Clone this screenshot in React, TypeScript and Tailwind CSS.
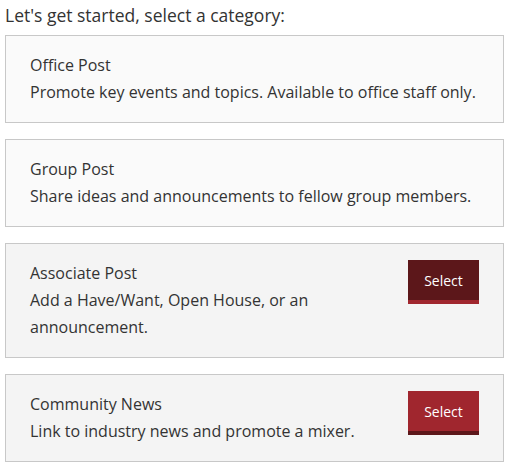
import React from "react";

type Category = {
  title: string;
  description: string;
  action?: "dark" | "red";
};

const categories: Category[] = [
  {
    title: "Office Post",
    description: "Promote key events and topics. Available to office staff only.",
  },
  {
    title: "Group Post",
    description: "Share ideas and announcements to fellow group members.",
  },
  {
    title: "Associate Post",
    description: "Add a Have/Want, Open House, or an announcement.",
    action: "dark",
  },
  {
    title: "Community News",
    description: "Link to industry news and promote a mixer.",
    action: "red",
  },
];

export default function App() {
  return (
    <div
      className="min-h-screen bg-white pl-[5px] pr-[3px] text-[#333333]"
      style={{ fontFamily: '"Open Sans", "Noto Sans", sans-serif' }}
    >
      <p className="pt-[2px] text-[17.5px] leading-[26px]">Let's get started, select a category:</p>

      <div className="mt-[7px] flex flex-col gap-4">
        {categories.map((cat) => (
          <div
            key={cat.title}
            className={`flex items-start gap-4 border border-[#c8c8c8] py-4 pl-6 ${
              cat.action ? "bg-[#f4f4f4] pr-6" : "bg-[#fafafa] pr-2"
            }`}
          >
            <div className="min-w-0 flex-1 text-[16px] leading-[27px]">
              <div>{cat.title}</div>
              <div>{cat.description}</div>
            </div>
            {cat.action && (
              <button
                className={`flex h-[44px] w-[71px] shrink-0 items-center justify-center border-b-4 pt-[1px] text-[14px] text-white ${
                  cat.action === "dark"
                    ? "border-[#a0262e] bg-[#5c171a]"
                    : "border-[#5c171a] bg-[#a0262e]"
                }`}
              >
                Select
              </button>
            )}
          </div>
        ))}
      </div>
    </div>
  );
}
